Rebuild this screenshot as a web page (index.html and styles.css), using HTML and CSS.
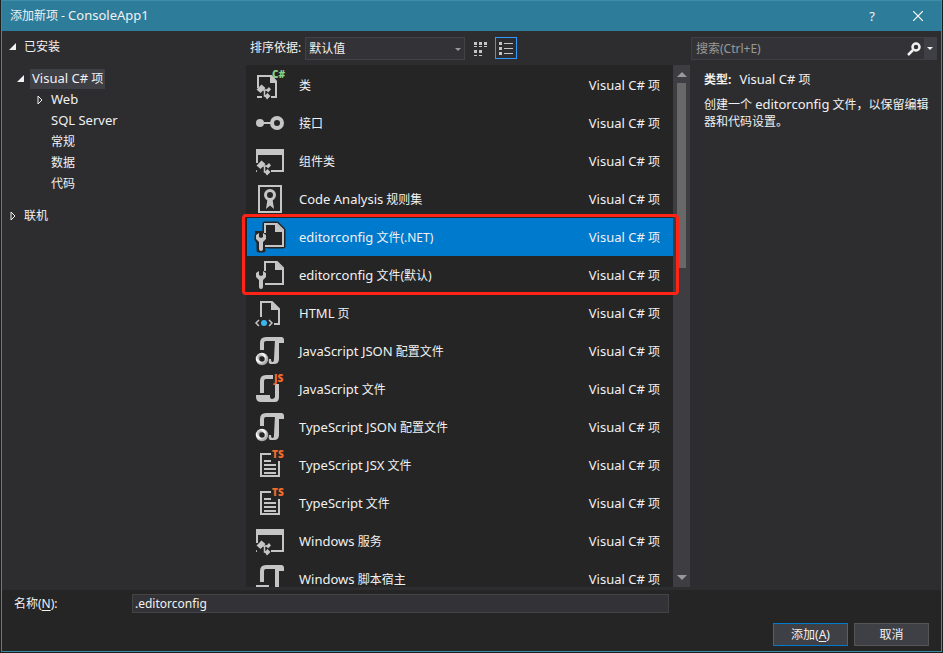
FILE: index.html
```html
<!DOCTYPE html>
<html lang="zh-CN">
<head>
<meta charset="utf-8">
<title>添加新项 - ConsoleApp1</title>
<link rel="stylesheet" href="styles.css">
</head>
<body>
<svg class="sprite" aria-hidden="true">
  <defs>
    <radialGradient id="ring-shade" cx=".3" cy=".3" r=".8">
      <stop offset="0" stop-color="#888"/>
      <stop offset=".6" stop-color="#fff"/>
      <stop offset="1" stop-color="#aaa"/>
    </radialGradient>
    <symbol id="nodes" viewBox="0 0 32 32">
      <path class="halo" d="M2 21l6-5 5 3 4 1v5l-1 6h-6l-1-4H3z"/>
      <path class="fill" d="M2.500 20.500l5-5 4 3.500-5 5zM12 21l3-3 2 2.500-3 3zM10.500 27l3-3 3 3-3.500 3.500z"/>
      <path class="line thin" d="M8 21h5M10.500 21v6h3"/>
    </symbol>
    <symbol id="class" viewBox="0 0 32 32">
      <path class="line" d="M4 19V7h13M17 7v6h5v15h-5M18 8l4 5M4 25v3h4"/>
      <path class="fill" d="M16 6h2l5 6v2h-7z"/>
      <use href="#nodes"/>
    </symbol>
    <symbol id="interface" viewBox="0 0 32 32">
      <circle class="fill" cx="6" cy="16" r="4"/>
      <path class="line" d="M8 16h10"/>
      <circle class="line heavy" cx="23" cy="16" r="5"/>
    </symbol>
    <symbol id="component" viewBox="0 0 32 32">
      <path class="fill" d="M2 4h28v6H2z"/>
      <path class="line" d="M3 9v9M29 9v17H17M3 25v1h5"/>
      <use href="#nodes"/>
    </symbol>
    <symbol id="ruleset" viewBox="0 0 32 32">
      <path class="line" d="M5 3h22v26H5z"/>
      <circle class="line bold" cx="16" cy="12" r="4.500"/>
      <path class="fill" d="M13.500 16h5l1.500 10-4-3.500-4 3.500z"/>
    </symbol>
    <symbol id="config" viewBox="0 0 32 32">
      <path class="halo outline" d="M11 11V3h12l6 6v16H13M3 14v4l2 3v8h4v-8l2-3v-4"/>
      <path class="paper" d="M11 3h12l6 6v16H11z"/>
      <path class="halo" d="M1 10h12v17H9v4H4v-9l-3-3z"/>
      <path class="line" d="M11 12V3h12l6 6v16H11M22 3v7h7"/>
      <path class="fill" d="M22 3l7 7h-7zM2 14l3-2v4l2 1 2-1v-4l3 2v4l-3 3v7q0 2-2 2t-2-2v-7l-3-3z"/>
    </symbol>
    <symbol id="html" viewBox="0 0 32 32">
      <path class="line" d="M7 20V5h11l7 7v15h-5"/>
      <path class="fill" d="M17 4l9 9h-9z"/>
      <path class="line thin" d="M5 23l-3 3 3 3M15 23l3 3-3 3"/>
      <circle class="blue" cx="10" cy="26" r="3"/>
    </symbol>
    <symbol id="scroll" viewBox="0 0 32 32">
      <path class="line heavy" d="M8 19V8q0-4 4-4h16"/>
      <path class="fill" d="M21 4q1-2 3-2h3q3 0 3 3v3h-5v17q0 4-4 4h-7q2-1 3-3h4z"/>
      <path class="fill" d="M2 22h13v3q0 2 2 2h5v2H7q-5 0-5-5z"/>
    </symbol>
    <symbol id="json" viewBox="0 0 32 32">
      <path class="line heavy" d="M8 15V8q0-4 4-4h16"/>
      <path class="fill" d="M21 4q1-2 3-2h3q3 0 3 3v3h-5v16q0 5-5 5h-4q-2-1-1-5h2q0 3 1.500 3t1.500-3z"/>
      <circle class="ring" cx="8" cy="24" r="4.500"/>
    </symbol>
    <symbol id="javascript" viewBox="0 0 32 32">
      <path class="line heavy" d="M8 20V8q0-4 4-4h7"/>
      <path class="line heavy" d="M23 11v13"/>
      <path class="fill" d="M2 22h14v2q0 2 2 2t3-2h4q0 5-4 5H7q-5 0-5-5z"/>
    </symbol>
    <symbol id="typescript" viewBox="0 0 32 32">
      <path class="line" d="M17 5H7v22h18V12"/>
      <path class="line" d="M10 12h7M10 16h12M10 20h12M10 24h12"/>
    </symbol>
  </defs>
</svg>

<div class="window">
  <header class="titlebar">
    <h1>添加新项 - <span lang="en">ConsoleApp1</span></h1>
    <button type="button" class="caption" aria-label="帮助">?</button>
    <button type="button" class="caption" aria-label="关闭">
      <svg width="10" height="10" viewBox="0 0 10 10"><path class="cross" d="M0 0l10 10M10 0L0 10"/></svg>
    </button>
  </header>

  <main class="content">
    <nav class="sidebar">
      <ul class="tree">
        <li><a href="#" class="node"><svg class="twisty" viewBox="0 0 8 8"><path class="open" d="M8 0v7H1z"/></svg><span class="label">已安装</span></a>
          <ul class="level-1">
            <li><a href="#" class="node"><svg class="twisty" viewBox="0 0 8 8"><path class="open" d="M8 0v7H1z"/></svg><span class="label current"><span lang="en">Visual C#</span> 项</span></a>
              <ul class="level-2">
                <li><a href="#" class="node"><svg class="twisty" viewBox="0 0 8 8"><path class="closed" d="M3 0l4 4-4 4z"/></svg><span class="label" lang="en">Web</span></a></li>
                <li><a href="#" class="node"><i class="twisty"></i><span class="label" lang="en">SQL Server</span></a></li>
                <li><a href="#" class="node"><i class="twisty"></i><span class="label">常规</span></a></li>
                <li><a href="#" class="node"><i class="twisty"></i><span class="label">数据</span></a></li>
                <li><a href="#" class="node"><i class="twisty"></i><span class="label">代码</span></a></li>
              </ul>
            </li>
          </ul>
        </li>
        <li><a href="#" class="node"><svg class="twisty" viewBox="0 0 8 8"><path class="closed" d="M3 0l4 4-4 4z"/></svg><span class="label">联机</span></a></li>
      </ul>
    </nav>

    <section class="templates">
      <div class="toolbar">
        <label for="sort">排序依据:</label>
        <div class="combo">
          <select id="sort"><option>默认值</option></select>
          <svg class="combo-arrow" width="6" height="3" viewBox="0 0 6 3"><path d="M0 0h6L3 3z"/></svg>
        </div>
        <button type="button" class="view" aria-label="小图标">
          <svg width="14" height="15" viewBox="0 0 14 15"><path class="fill" d="M0 1h3v3H0zM5 1h3v3H5zM10 1h3v3h-3zM0 5h3v1H0zM5 5h3v1H5zM10 5h3v1h-3zM0 9h3v3H0zM5 9h3v3H5zM0 14h3v1H0zM5 14h3v1H5z"/></svg>
        </button>
        <button type="button" class="view active" aria-label="列表">
          <svg width="14" height="13" viewBox="0 0 14 13"><path class="fill" d="M0 0h3v3H0zM0 5h3v3H0zM0 10h3v3H0zM5 1h9v1H5zM5 6h9v1H5zM5 11h9v1H5z"/></svg>
        </button>
      </div>

      <div class="list-area">
        <ul class="items">
          <li><svg class="icon"><use href="#class"/><text class="tag green" x="18" y="9">C#</text></svg><span class="name">类</span><span class="kind"><span lang="en">Visual C#</span> 项</span></li>
          <li><svg class="icon"><use href="#interface"/></svg><span class="name">接口</span><span class="kind"><span lang="en">Visual C#</span> 项</span></li>
          <li><svg class="icon"><use href="#component"/></svg><span class="name">组件类</span><span class="kind"><span lang="en">Visual C#</span> 项</span></li>
          <li><svg class="icon"><use href="#ruleset"/></svg><span class="name"><span lang="en">Code Analysis</span> 规则集</span><span class="kind"><span lang="en">Visual C#</span> 项</span></li>
          <li class="selected"><svg class="icon"><use href="#config"/></svg><span class="name"><span lang="en">editorconfig</span> 文件(.NET)</span><span class="kind"><span lang="en">Visual C#</span> 项</span></li>
          <li><svg class="icon"><use href="#config"/></svg><span class="name"><span lang="en">editorconfig</span> 文件(默认)</span><span class="kind"><span lang="en">Visual C#</span> 项</span></li>
          <li><svg class="icon"><use href="#html"/></svg><span class="name"><span lang="en">HTML</span> 页</span><span class="kind"><span lang="en">Visual C#</span> 项</span></li>
          <li><svg class="icon"><use href="#json"/></svg><span class="name"><span lang="en">JavaScript JSON</span> 配置文件</span><span class="kind"><span lang="en">Visual C#</span> 项</span></li>
          <li><svg class="icon"><use href="#javascript"/><text class="tag orange" x="20" y="9">JS</text></svg><span class="name"><span lang="en">JavaScript</span> 文件</span><span class="kind"><span lang="en">Visual C#</span> 项</span></li>
          <li><svg class="icon"><use href="#json"/></svg><span class="name"><span lang="en">TypeScript JSON</span> 配置文件</span><span class="kind"><span lang="en">Visual C#</span> 项</span></li>
          <li><svg class="icon"><use href="#typescript"/><text class="tag orange" x="18" y="9">TS</text></svg><span class="name"><span lang="en">TypeScript JSX</span> 文件</span><span class="kind"><span lang="en">Visual C#</span> 项</span></li>
          <li><svg class="icon"><use href="#typescript"/><text class="tag orange" x="18" y="9">TS</text></svg><span class="name"><span lang="en">TypeScript</span> 文件</span><span class="kind"><span lang="en">Visual C#</span> 项</span></li>
          <li><svg class="icon"><use href="#component"/></svg><span class="name"><span lang="en">Windows</span> 服务</span><span class="kind"><span lang="en">Visual C#</span> 项</span></li>
          <li><svg class="icon"><use href="#scroll"/></svg><span class="name"><span lang="en">Windows</span> 脚本宿主</span><span class="kind"><span lang="en">Visual C#</span> 项</span></li>
        </ul>
        <div class="scrollbar">
          <svg width="10" height="5" viewBox="0 0 10 5"><path d="M0 5h10L5 0z"/></svg>
          <div class="track"><div class="thumb"></div></div>
          <svg width="10" height="5" viewBox="0 0 10 5"><path d="M0 0h10L5 5z"/></svg>
        </div>
        <div class="highlight"></div>
      </div>
    </section>

    <aside class="details">
      <div class="search">
        <input type="text" aria-label="搜索" placeholder="搜索(Ctrl+E)">
        <button type="button" class="find" aria-label="搜索">
          <svg width="14" height="14" viewBox="0 0 14 14"><circle cx="9" cy="5" r="3.500"/><path d="M6 8l-5 5"/></svg>
        </button>
        <button type="button" class="more" aria-label="搜索选项">
          <svg width="6" height="3" viewBox="0 0 6 3"><path d="M0 0h6L3 3z"/></svg>
        </button>
      </div>
      <div class="description">
        <p><strong>类型:</strong><span lang="en">Visual C#</span> 项</p>
        <p>创建一个 <span lang="en">editorconfig</span> 文件，以保留编辑器和代码设置。</p>
      </div>
    </aside>
  </main>

  <footer class="footer">
    <div class="name-row">
      <label for="filename">名称(<u>N</u>):</label>
      <input id="filename" type="text" value=".editorconfig">
    </div>
    <div class="actions">
      <button type="button" class="primary">添加(<u>A</u>)</button>
      <button type="button">取消</button>
    </div>
  </footer>
</div>
</body>
</html>
```
FILE: styles.css
```css
* {
  box-sizing: border-box;
}

body {
  margin: 0;
  height: 100vh;
  padding: 0 1px 1px;
  background: #1e1e1e;
  color: #f1f1f1;
  font: 12px/18px "Noto Sans", "Noto Sans CJK SC", sans-serif;
}

/* Latin runs are set slightly larger to balance the Chinese glyphs */
span[lang="en"] {
  font-size: 13px;
  line-height: 1;
}

button,
input,
select {
  font: inherit;
  color: inherit;
  margin: 0;
  border-radius: 0;
}

button {
  display: flex;
  align-items: center;
  justify-content: center;
  padding: 0;
  border: 0;
  background: none;
}

ul {
  list-style: none;
  margin: 0;
  padding: 0;
}

u {
  text-underline-offset: 2px;
}

.sprite {
  position: absolute;
  width: 0;
  height: 0;
}

.window {
  display: flex;
  flex-direction: column;
  height: 100%;
  border: 1px solid #3a8ba5;
  border-top-color: #3f8ca6;
  background: #2d2d30;
}

.titlebar {
  display: flex;
  align-items: center;
  height: 30px;
  flex: none;
  padding-left: 8px;
  background: #2d7d9a;
}

.titlebar h1 {
  flex: 1;
  margin: 0;
  font-size: 12px;
  font-weight: normal;
}

.caption {
  width: 46px;
  height: 30px;
  font-size: 13px;
}

.cross {
  stroke: #fff;
  stroke-width: 1.2;
}

.content {
  display: grid;
  grid-template-columns: 244px minmax(0, 1fr) 251px;
  flex: 1;
  min-height: 0;
}

/* Category tree */

.tree {
  padding: 5px 0 0 6px;
}

.node {
  display: flex;
  align-items: center;
  height: 21px;
  color: inherit;
  text-decoration: none;
}

.label {
  padding: 1px 2px;
}

.twisty {
  width: 8px;
  height: 8px;
  margin-right: 6px;
}

.level-1 {
  padding: 11px 0 11px 8px;
}

.level-2 {
  padding-left: 19px;
}

.current {
  background: #3f3f46;
}

.open {
  fill: #f1f1f1;
}

.closed {
  fill: none;
  stroke: #f1f1f1;
}

/* Template list */

.templates {
  display: flex;
  flex-direction: column;
  min-height: 0;
  padding-bottom: 3px;
}

.toolbar {
  display: flex;
  align-items: center;
  height: 34px;
  flex: none;
  padding-left: 4px;
}

.combo {
  position: relative;
  width: 160px;
  margin: 0 5px 0 4px;
}

.combo select {
  display: block;
  width: 100%;
  height: 23px;
  padding: 1px 3px 0;
  appearance: none;
  border: 1px solid #434346;
  background: #333337;
}

.combo-arrow {
  position: absolute;
  right: 4px;
  top: 11px;
  fill: #999;
}

.view {
  width: 22px;
  height: 22px;
  margin-right: 3px;
}

.active {
  border: 1px solid #3399ff;
}

.list-area {
  position: relative;
  display: flex;
  flex: 1;
  min-height: 0;
}

.items {
  flex: 1;
  padding: 1px 0 0 1px;
  overflow: hidden;
  background: #252526;
}

.items li {
  display: flex;
  align-items: center;
  height: 38px;
  padding: 0 13px 0 7px;
}

.items .selected {
  background: #007acc;
}

.name {
  flex: 1;
  padding: 2px 0 0 13px;
}

.kind {
  padding-top: 2px;
}

.icon {
  width: 32px;
  height: 32px;
}

.fill {
  fill: #c5c5c5;
}

.line {
  fill: none;
  stroke: #c5c5c5;
  stroke-width: 2;
}

.thin {
  stroke-width: 1.5;
}

.bold {
  stroke-width: 3;
}

.heavy {
  stroke-width: 4;
}

.halo,
.paper {
  fill: #252526;
}

.outline {
  stroke: #252526;
  stroke-width: 5;
  stroke-linejoin: round;
}

.ring {
  fill: #252526;
  stroke: url(#ring-shade);
  stroke-width: 3.5;
}

.blue {
  fill: #3bb5f0;
}

.tag {
  font: 800 10px/10px "Open Sans", sans-serif;
}

.green {
  fill: #89d185;
}

.orange {
  fill: #f26b2c;
}

.scrollbar {
  display: flex;
  flex-direction: column;
  align-items: center;
  width: 17px;
  padding: 7px 0;
  background: #3e3e42;
  fill: #999;
}

.track {
  flex: 1;
  width: 9px;
  padding: 6px 0;
}

.thumb {
  height: 38%;
  background: #686868;
}

.highlight {
  position: absolute;
  top: 149px;
  left: -4px;
  right: 11px;
  height: 81px;
  border: 3px solid #ff2416;
  border-radius: 4px;
}

/* Search and details */

.search {
  display: flex;
  height: 23px;
  margin: 6px 4px 0 1px;
  border: 1px solid #3f3f46;
  background: #333337;
}

.search input {
  flex: 1;
  min-width: 0;
  padding: 1px 4px 0;
  border: 0;
  background: none;
}

.search input::placeholder {
  color: #999;
}

.find {
  width: 20px;
}

.find svg {
  fill: none;
  stroke: #f1f1f1;
  stroke-width: 2.5;
}

.more {
  width: 12px;
  background: #3f3f46;
  fill: #f1f1f1;
}

.description {
  padding: 11px 12px 0 14px;
}

.description p {
  margin: 0 0 8px;
  line-height: 17px;
}

.description strong {
  margin-right: 8px;
}

/* Footer */

.footer {
  flex: none;
  padding: 4px 12px 5px;
  background: #252526;
}

.name-row {
  display: flex;
  align-items: center;
}

.name-row label {
  width: 118px;
}

.name-row input {
  width: 537px;
  height: 19px;
  padding: 0 2px;
  border: 1px solid #434346;
  background: #333337;
}

.actions {
  display: flex;
  justify-content: flex-end;
  gap: 6px;
  margin-top: 10px;
}

.actions button {
  width: 75px;
  height: 23px;
  border: 1px solid #555558;
  background: #3f3f46;
}

.actions .primary {
  border-color: #007acc;
}
```
